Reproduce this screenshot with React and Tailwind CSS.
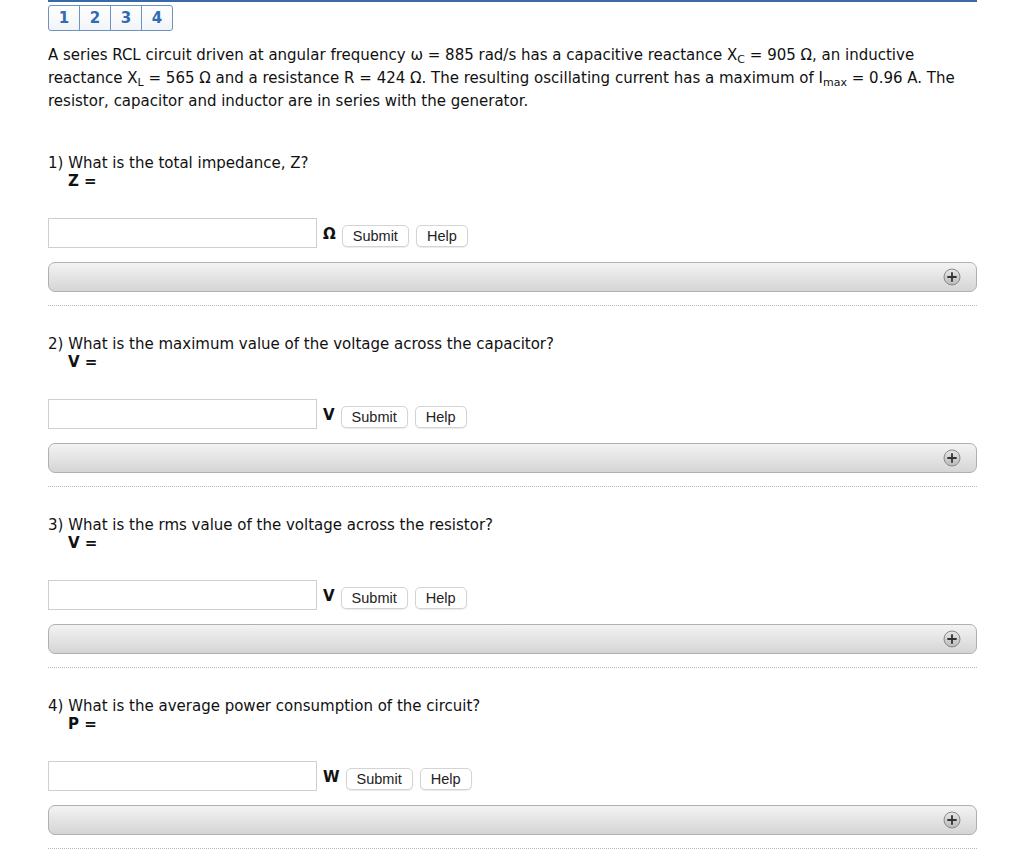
import React from 'react';

const questions = [
  { n: 1, text: 'What is the total impedance, Z?', label: 'Z =', unit: 'Ω' },
  { n: 2, text: 'What is the maximum value of the voltage across the capacitor?', label: 'V =', unit: 'V' },
  { n: 3, text: 'What is the rms value of the voltage across the resistor?', label: 'V =', unit: 'V' },
  { n: 4, text: 'What is the average power consumption of the circuit?', label: 'P =', unit: 'W' },
];

function PlusIcon() {
  return (
    <svg width="18" height="18" viewBox="0 0 18 18">
      <defs>
        <linearGradient id="pg" x1="0" y1="0" x2="0" y2="1">
          <stop offset="0" stopColor="#e8e8e8" />
          <stop offset="1" stopColor="#b9b9b9" />
        </linearGradient>
      </defs>
      <circle cx="9" cy="9" r="8" fill="url(#pg)" stroke="#8a8a8a" strokeWidth="1" />
      <path d="M9 5v8M5 9h8" stroke="#333" strokeWidth="1.8" strokeLinecap="round" />
    </svg>
  );
}

function Sub({ children }) {
  return <sub className="text-[11px] leading-none relative top-[3px]">{children}</sub>;
}

function Question({ q }) {
  return (
    <div className="pt-[28px]">
      <div className="leading-[18px] pt-px">
        <div>{q.n}) {q.text}</div>
        <div className="pl-[20px] font-bold">{q.label}</div>
      </div>
      <div className="flex items-start mt-[28px]">
        <input className="w-[269px] h-[30px] border border-[#cfcfcf] bg-white outline-none" />
        <span className="ml-[6px] mt-[5px] font-bold">{q.unit}</span>
        <div className="flex gap-[7px] mt-[7px] ml-[6px] font-['Liberation_Sans',Arial,sans-serif] text-[14.5px]">
          <button className="h-[22px] px-[10px] rounded-[5px] border border-[#d4d4d4] bg-white text-[#222] shadow-[0_1px_1px_rgba(0,0,0,0.08)]">Submit</button>
          <button className="h-[22px] px-[10px] rounded-[5px] border border-[#d4d4d4] bg-white text-[#222] shadow-[0_1px_1px_rgba(0,0,0,0.08)]">Help</button>
        </div>
      </div>
      <div className="mt-[14px] h-[30px] rounded-[7px] border border-[#b0b0b0] bg-gradient-to-b from-[#f3f3f3] to-[#d5d5d5] flex items-center justify-end pr-[15px]">
        <PlusIcon />
      </div>
      <div className="mt-[13px] border-t border-dotted border-[#b8b8b8]" />
    </div>
  );
}

export default function App() {
  return (
    <div className="min-h-[862px] bg-white text-[#111] font-['DejaVu_Sans',Verdana,sans-serif] text-[15px]">
      <div className="ml-[48px] w-[929px]">
        <div className="border-t-2 border-[#3a6aa6]" />
        <div className="flex mt-[3px]">
          {[1, 2, 3, 4].map((t, i) => (
            <div
              key={t}
              className={
                'w-[32px] h-[26px] flex items-center justify-center border border-[#6f93bf] text-[#2f6cb4] font-bold text-[15px] bg-gradient-to-b from-white to-[#f1f4f8] ' +
                (i > 0 ? '-ml-px ' : '') +
                (i === 0 ? 'rounded-l-[3px]' : i === 3 ? 'rounded-r-[3px]' : '')
              }
            >
              {t}
            </div>
          ))}
        </div>
        <p className="mt-[13px] leading-[23px]">
          A series RCL circuit driven at angular frequency ω = 885 rad/s has a capacitive reactance X<Sub>C</Sub> = 905 Ω, an inductive reactance X<Sub>L</Sub> = 565 Ω and a resistance R = 424 Ω. The resulting oscillating current has a maximum of I<Sub>max</Sub> = 0.96 A. The resistor, capacitor and inductor are in series with the generator.
        </p>
        <div className="mt-[12px]">
          {questions.map((q) => (
            <Question key={q.n} q={q} />
          ))}
        </div>
      </div>
    </div>
  );
}
